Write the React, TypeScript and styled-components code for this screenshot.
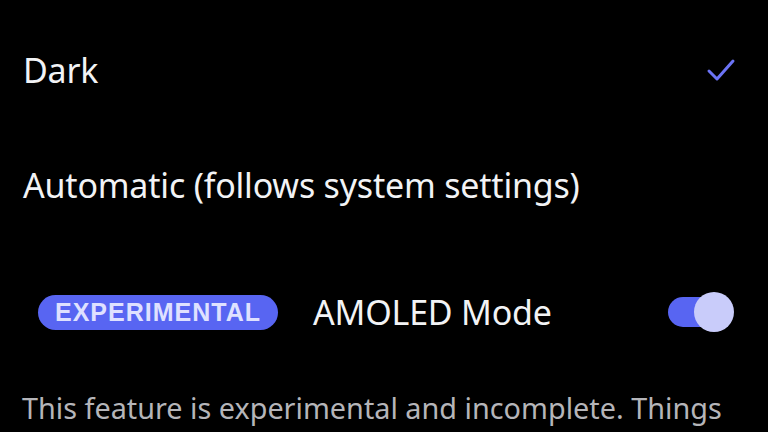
import React, { useState } from "react";
import styled, { createGlobalStyle } from "styled-components";

const GlobalStyle = createGlobalStyle`
  html, body {
    margin: 0;
    padding: 0;
    background: #000;
  }
  body {
    font-family: "Noto Sans", "Open Sans", sans-serif;
    color: #f2f3f5;
    overflow: hidden;
  }
`;

const Screen = styled.div`
  width: 768px;
  height: 432px;
  background: #000;
  display: flex;
  flex-direction: column;
  padding-top: 12px;
  box-sizing: border-box;
  overflow: hidden;
`;

const OptionRow = styled.div`
  flex-shrink: 0;
  height: 115px;
  display: flex;
  align-items: center;
  justify-content: space-between;
  padding: 0 32px 0 23px;
`;

const OptionLabel = styled.span`
  font-size: 34px;
  color: #f2f3f5;
  letter-spacing: -0.2px;
`;

const ToggleRow = styled.div`
  flex-shrink: 0;
  height: 110px;
  margin-top: 15px;
  display: flex;
  align-items: center;
  padding: 0 42px 0 38px;
  gap: 35px;
`;

const Badge = styled.span`
  background: #5865f2;
  color: #dfe1ff;
  font-family: "Liberation Sans", Arial, sans-serif;
  font-weight: 700;
  font-size: 25px;
  letter-spacing: 1px;
  height: 35px;
  padding: 0 17px;
  border-radius: 18px;
  display: inline-flex;
  align-items: center;
`;

const ToggleLabel = styled.span`
  flex: 1;
  font-size: 34px;
  letter-spacing: -0.2px;
  color: #f2f3f5;
`;

const Track = styled.button<{ $on: boolean }>`
  position: relative;
  width: 58px;
  height: 30px;
  border: none;
  padding: 0;
  border-radius: 15px;
  background: ${(p) => (p.$on ? "#5865f2" : "#4e5058")};
  cursor: pointer;
`;

const Thumb = styled.span<{ $on: boolean }>`
  position: absolute;
  top: 50%;
  left: ${(p) => (p.$on ? "26px" : "-6px")};
  width: 40px;
  height: 40px;
  margin-top: -20px;
  border-radius: 50%;
  background: #c9ccfa;
`;

const Description = styled.p`
  flex-shrink: 0;
  margin: 18px 0 0;
  padding: 0 22px;
  font-size: 28.8px;
  line-height: 46px;
  color: #b5b5b9;
`;

const Check = () => (
  <svg width="30" height="26" viewBox="0 0 30 26" fill="none">
    <path
      d="M3 14 L11 22 L27 4"
      stroke="#6b73f5"
      strokeWidth="3"
      strokeLinecap="round"
      strokeLinejoin="round"
    />
  </svg>
);

const App: React.FC = () => {
  const [amoled, setAmoled] = useState(true);

  return (
    <>
      <GlobalStyle />
      <Screen>
        <OptionRow>
          <OptionLabel>Dark</OptionLabel>
          <Check />
        </OptionRow>
        <OptionRow>
          <OptionLabel>Automatic (follows system settings)</OptionLabel>
        </OptionRow>
        <ToggleRow>
          <Badge>EXPERIMENTAL</Badge>
          <ToggleLabel>AMOLED Mode</ToggleLabel>
          <Track $on={amoled} onClick={() => setAmoled(!amoled)}>
            <Thumb $on={amoled} />
          </Track>
        </ToggleRow>
        <Description>
          This feature is experimental and incomplete. Things may not look right.
        </Description>
      </Screen>
    </>
  );
};

export default App;
